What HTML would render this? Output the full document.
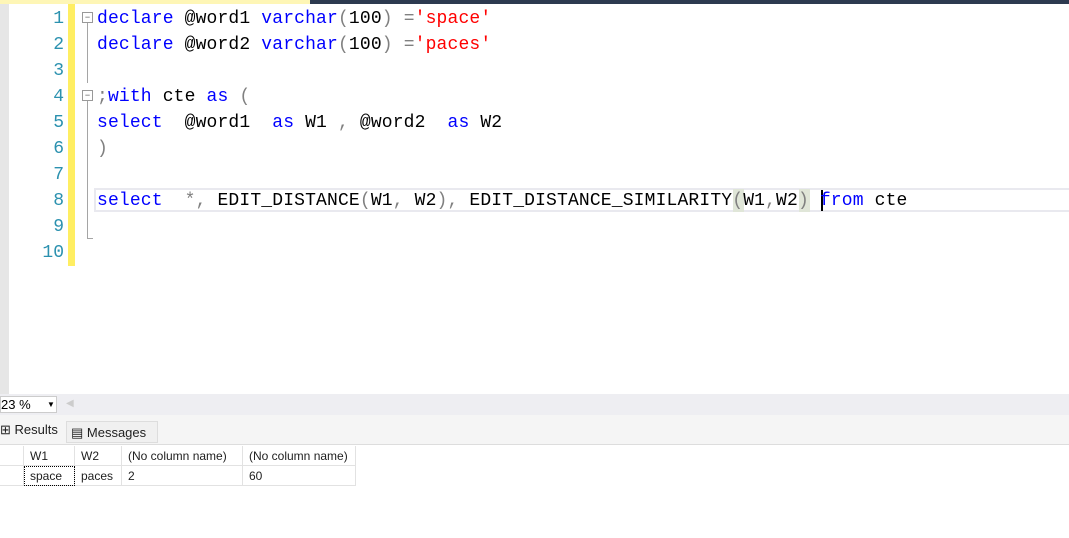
<!DOCTYPE html>
<html><head><style>
body{margin:0;width:1069px;height:538px;overflow:hidden;background:#fff;position:relative;font-family:"Liberation Sans",sans-serif}
.a{position:absolute}
.code{font-family:"Liberation Mono",monospace;font-size:18px;line-height:26px;white-space:pre;letter-spacing:0.15px}
.ln{position:absolute;left:20px;width:44px;text-align:right;color:#2b91af;font-family:"Liberation Mono",monospace;font-size:18px;line-height:26px}
.k{color:#0000ff}.s{color:#ff0000}.g{color:#808080}
.mk{position:absolute;left:82px;width:9px;height:9px;border:1px solid #999;background:#fff;font-size:9px;line-height:8px;text-align:center;color:#555}
td{border-right:1px solid #e2e2e2;border-bottom:1px solid #e2e2e2;padding:0 6px;height:18px;font-size:12px}
</style></head><body>
<div class="a" style="left:0;top:0;width:310px;height:4px;background:#fef6b6"></div>
<div class="a" style="left:310px;top:0;width:759px;height:4px;background:#2d3a50"></div>
<div class="a" style="left:0;top:4px;width:9px;height:390px;background:#e6e6e6"></div>
<div class="a" style="left:68px;top:4px;width:7px;height:262px;background:#ffee62"></div>
<div class="ln" style="top:6px">1<br>2<br>3<br>4<br>5<br>6<br>7<br>8<br>9<br>10</div>
<div class="a" style="left:87px;top:23px;width:1px;height:60px;background:#a5a5a5"></div>
<div class="a" style="left:87px;top:101px;width:1px;height:138px;background:#a5a5a5"></div>
<div class="a" style="left:87px;top:238px;width:6px;height:1px;background:#a5a5a5"></div>
<div class="mk" style="top:12px">−</div>
<div class="mk" style="top:90px">−</div>
<div class="a" style="left:94px;top:188px;width:975px;height:24px;border:2px solid #e9e9ef;border-right:none;box-sizing:border-box"></div>
<div class="a" style="left:733px;top:189px;width:11px;height:23px;background:#e0e6d8"></div>
<div class="a" style="left:799px;top:189px;width:11px;height:23px;background:#e0e6d8"></div>
<div class="a" style="left:821px;top:190px;width:2px;height:21px;background:#000"></div>
<div class="a code" style="left:97px;top:6px"><span class="k">declare</span> @word1 <span class="k">varchar</span><span class="g">(</span>100<span class="g">)</span> <span class="g">=</span><span class="s">'space'</span>
<span class="k">declare</span> @word2 <span class="k">varchar</span><span class="g">(</span>100<span class="g">)</span> <span class="g">=</span><span class="s">'paces'</span>

<span class="g">;</span><span class="k">with</span> cte <span class="k">as</span> <span class="g">(</span>
<span class="k">select</span>  @word1  <span class="k">as</span> W1 <span class="g">,</span> @word2  <span class="k">as</span> W2
<span class="g">)</span>

<span class="k">select</span>  <span class="g">*,</span> EDIT_DISTANCE<span class="g">(</span>W1<span class="g">,</span> W2<span class="g">),</span> EDIT_DISTANCE_SIMILARITY<span class="g">(</span>W1<span class="g">,</span>W2<span class="g">)</span> <span class="k">from</span> cte</div>
<div class="a" style="left:0;top:394px;width:1069px;height:21px;background:#eeeef2"></div>
<div class="a" style="left:0;top:396px;width:57px;height:17px;background:#fff;border:1px solid #ccc;box-sizing:border-box;font-size:13px;line-height:15px">23 %<span style="position:absolute;left:46px;font-size:8px">▼</span></div>
<div class="a" style="left:66px;top:398px;color:#ccc;font-size:10px">◀</div>
<div class="a" style="left:0;top:415px;width:1069px;height:29px;background:#f5f5f5;border-bottom:1px solid #ddd"></div>
<div class="a" style="left:0;top:422px;font-size:13px;color:#1e1e1e">⊞ Results</div>
<div class="a" style="left:66px;top:421px;width:92px;height:22px;background:#f0f0f0;border:1px solid #ddd;box-sizing:border-box;font-size:13px;padding:3px 0 0 4px;color:#1e1e1e">▤ Messages</div>
<table class="a" style="left:0;top:446px;border-collapse:collapse;color:#1e1e1e">
<tr><td style="width:11px;height:19px"></td><td style="width:38px">W1</td><td style="width:34px">W2</td><td style="width:108px">(No column name)</td><td style="width:100px">(No column name)</td></tr>
<tr><td style="height:19px"></td><td style="outline:1px dotted #000;outline-offset:-1px">space</td><td>paces</td><td>2</td><td>60</td></tr>
</table>
</body></html>
